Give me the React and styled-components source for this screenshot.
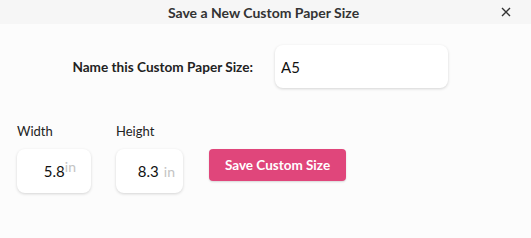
import React, { useState } from "react";
import styled, { createGlobalStyle } from "styled-components";

const GlobalStyle = createGlobalStyle`
  html, body {
    margin: 0;
    padding: 0;
    background: #fcfcfc;
  }
  body {
    font-family: Lato, "Open Sans", sans-serif;
    color: #222;
  }
`

const Dialog = styled.div`
  width: 531px;
  height: 238px;
  background: #fcfcfc;
  display: flex;
  flex-direction: column;
`

const Header = styled.div`
  height: 24px;
  background: #f6f6f6;
  display: flex;
  align-items: center;
  justify-content: center;
  position: relative;
`

const Title = styled.div`
  font-size: 14px;
  font-weight: 700;
  color: #333;
  margin-left: -4px;
`

const Close = styled.button`
  position: absolute;
  right: 20px;
  top: 7px;
  width: 10px;
  height: 10px;
  padding: 0;
  border: 0;
  background: none;
  display: flex;
  cursor: pointer;
`

const NameRow = styled.div`
  display: flex;
  align-items: center;
  gap: 22px;
  margin-top: 21px;
`

const NameLabel = styled.label`
  width: 253px;
  text-align: right;
  font-size: 13.6px;
  font-weight: 700;
  color: #222;
`

const Box = styled.div`
  background: #fff;
  border-radius: 8px;
  box-shadow: 0 1px 3px rgba(0, 0, 0, 0.16);
  box-sizing: border-box;
`

const NameInput = styled(Box).attrs({ as: "input" })`
  width: 173px;
  height: 43px;
  border: 0;
  outline: none;
  padding: 0 6px;
  font-family: inherit;
  font-size: 15px;
  color: #111;
`

const SizeGrid = styled.div`
  display: grid;
  grid-template-columns: 74px 67px auto;
  column-gap: 25px;
  row-gap: 10px;
  align-items: start;
  justify-content: start;
  margin: 35px 0 0 17px;
`

const FieldLabel = styled.div`
  font-size: 13px;
  line-height: 16px;
  color: #222;
`

const SizeBox = styled(Box)`
  height: 44px;
  display: flex;
  align-items: center;
  justify-content: flex-end;
  padding-right: ${p => p.$pad}px;
`

const Value = styled.span`
  font-size: 15px;
  color: #111;
`

const Unit = styled.span`
  font-size: 14px;
  color: #c4c4c4;
  margin-left: ${p => p.$gap}px;
  align-self: ${p => (p.$raised ? "flex-start" : "center")};
  margin-top: ${p => (p.$raised ? "9px" : "0")};
`

const SaveButton = styled.button`
  width: 137px;
  height: 32px;
  border: 0;
  border-radius: 4px;
  background: #e0467b;
  color: #fff;
  font-family: inherit;
  font-size: 13.5px;
  font-weight: 700;
  box-shadow: 0 1px 2px rgba(0, 0, 0, 0.15);
  cursor: pointer;
  margin-left: 1px;
`

const App = () => {
  const [name, setName] = useState("A5");

  return (
    <Dialog>
      <GlobalStyle />
      <Header>
        <Title>Save a New Custom Paper Size</Title>
        <Close aria-label="Close">
          <svg width="10" height="10" viewBox="0 0 10 10">
            <path d="M1 1L9 9M9 1L1 9" stroke="#333" strokeWidth="1.4" />
          </svg>
        </Close>
      </Header>
      <NameRow>
        <NameLabel>Name this Custom Paper Size:</NameLabel>
        <NameInput value={name} onChange={e => setName(e.target.value)} />
      </NameRow>
      <SizeGrid>
        <FieldLabel>Width</FieldLabel>
        <FieldLabel>Height</FieldLabel>
        <div />
        <SizeBox $pad={15}>
          <Value>5.8</Value>
          <Unit $raised $gap={0}>in</Unit>
        </SizeBox>
        <SizeBox $pad={8}>
          <Value>8.3</Value>
          <Unit $gap={5}>in</Unit>
        </SizeBox>
        <SaveButton>Save Custom Size</SaveButton>
      </SizeGrid>
    </Dialog>
  );
}

export default App;
